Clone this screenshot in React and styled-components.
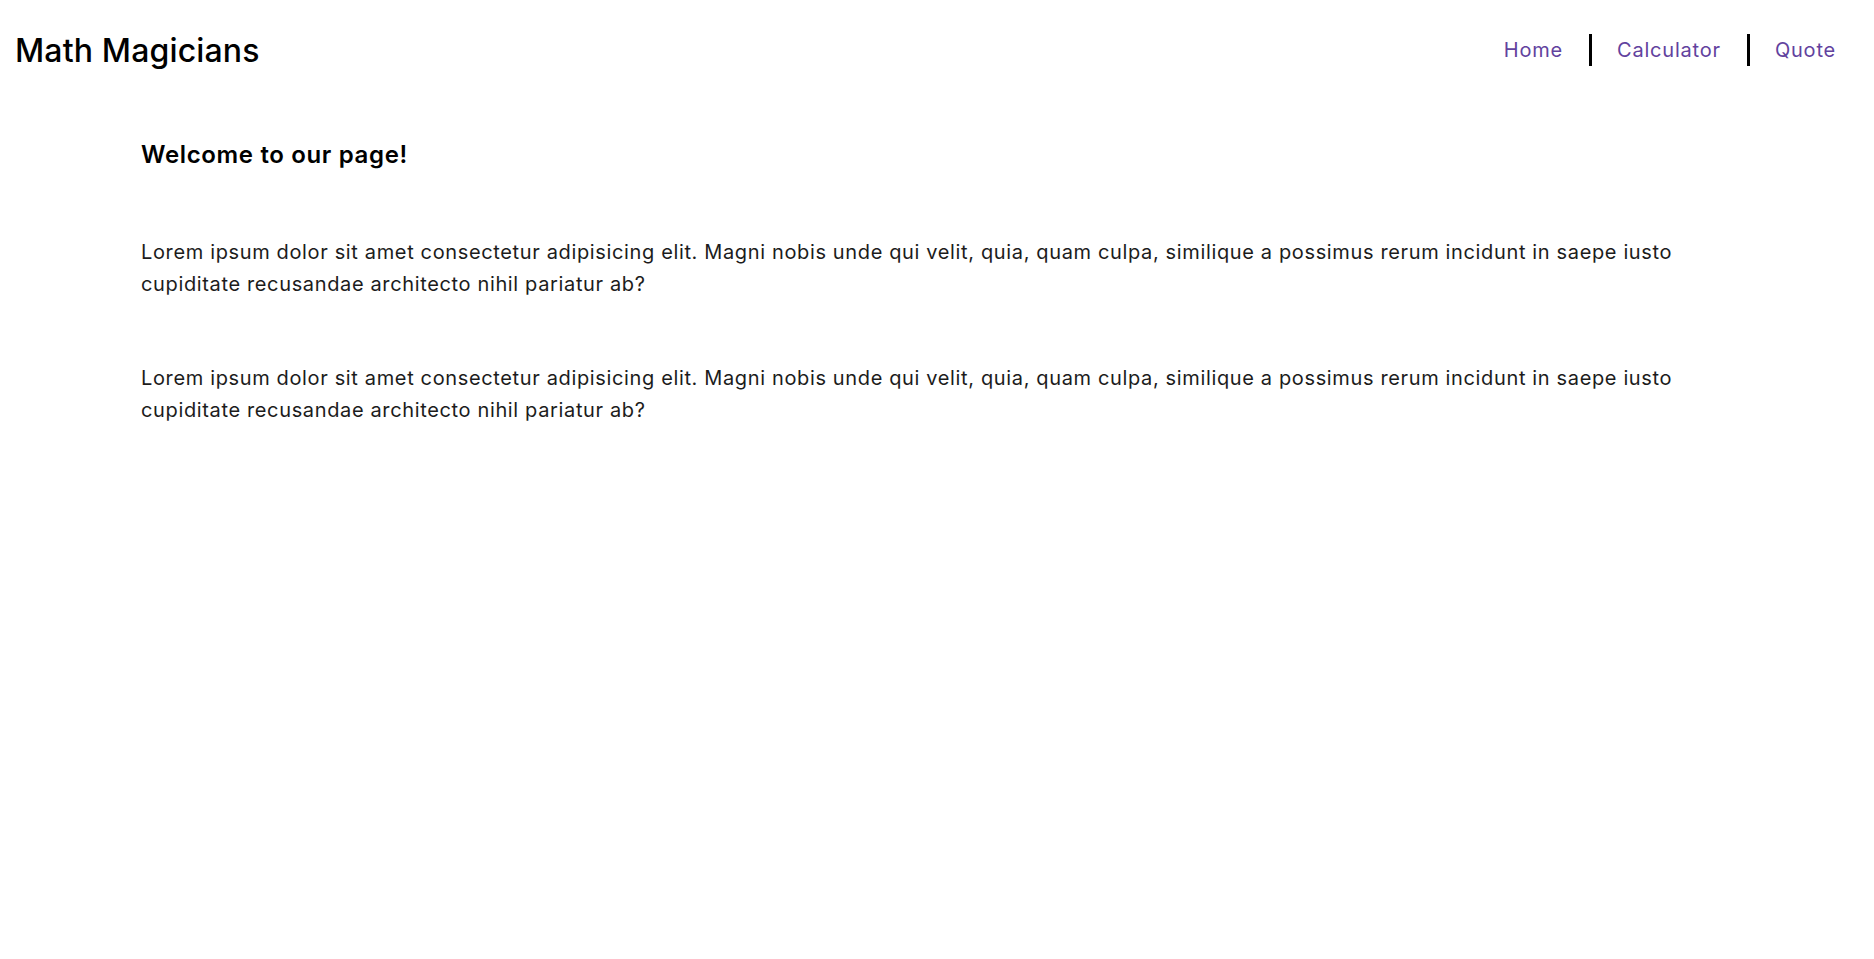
import React from "react";
import styled, { createGlobalStyle } from "styled-components";

const GlobalStyle = createGlobalStyle`
  * { box-sizing: border-box; }
  html, body {
    margin: 0;
    padding: 0;
    background: #ffffff;
  }
  body {
    font-family: "Inter", "Noto Sans", "Liberation Sans", sans-serif;
    color: #000;
  }
`;

const Page = styled.div`
  display: flex;
  flex-direction: column;
  min-height: 100vh;
`;

const Header = styled.header`
  display: flex;
  align-items: center;
  justify-content: space-between;
  height: 100px;
  padding: 0 38px 0 15px;
`;

const Brand = styled.h1`
  margin: 0;
  font-size: 32px;
  font-weight: 500;
  color: #000;
  letter-spacing: 0.15px;
`;

const NavList = styled.ul`
  display: flex;
  align-items: center;
  list-style: none;
  margin: 0;
  padding: 0;
`;

const NavItem = styled.li`
  display: flex;
  align-items: center;
  height: 32px;
  padding: 0 ${(p) => (p.$last ? "0" : "26px")} 0 ${(p) => (p.$first ? "0" : "25px")};
  border-left: ${(p) => (p.$first ? "none" : "3px solid #000")};
`;

const NavLink = styled.a`
  font-size: 20px;
  font-weight: 400;
  letter-spacing: 0.8px;
  color: #62429e;
  text-decoration: none;
  cursor: pointer;
`;

const Main = styled.main`
  display: flex;
  flex-direction: column;
  padding: 40px 141px 0 141px;
`;

const Heading = styled.h2`
  margin: 0 0 67px;
  font-size: 24px;
  font-weight: 600;
  letter-spacing: 0.65px;
  color: #000;
`;

const Paragraphs = styled.div`
  display: flex;
  flex-direction: column;
  gap: 62px;
`;

const Text = styled.p`
  margin: 0;
  font-size: 20px;
  line-height: 32px;
  letter-spacing: 0.64px;
  color: #1c1c1c;
`;

const lorem =
  "Lorem ipsum dolor sit amet consectetur adipisicing elit. Magni nobis unde qui velit, quia, quam culpa, similique a possimus rerum incidunt in saepe iusto cupiditate recusandae architecto nihil pariatur ab?";

const links = ["Home", "Calculator", "Quote"];

export default function App() {
  return (
    <>
      <GlobalStyle />
      <Page>
        <Header>
          <Brand>Math Magicians</Brand>
          <nav>
            <NavList>
              {links.map((l, i) => (
                <NavItem key={l} $first={i === 0} $last={i === links.length - 1}>
                  <NavLink href="#">{l}</NavLink>
                </NavItem>
              ))}
            </NavList>
          </nav>
        </Header>
        <Main>
          <Heading>Welcome to our page!</Heading>
          <Paragraphs>
            <Text>{lorem}</Text>
            <Text>{lorem}</Text>
          </Paragraphs>
        </Main>
      </Page>
    </>
  );
}
